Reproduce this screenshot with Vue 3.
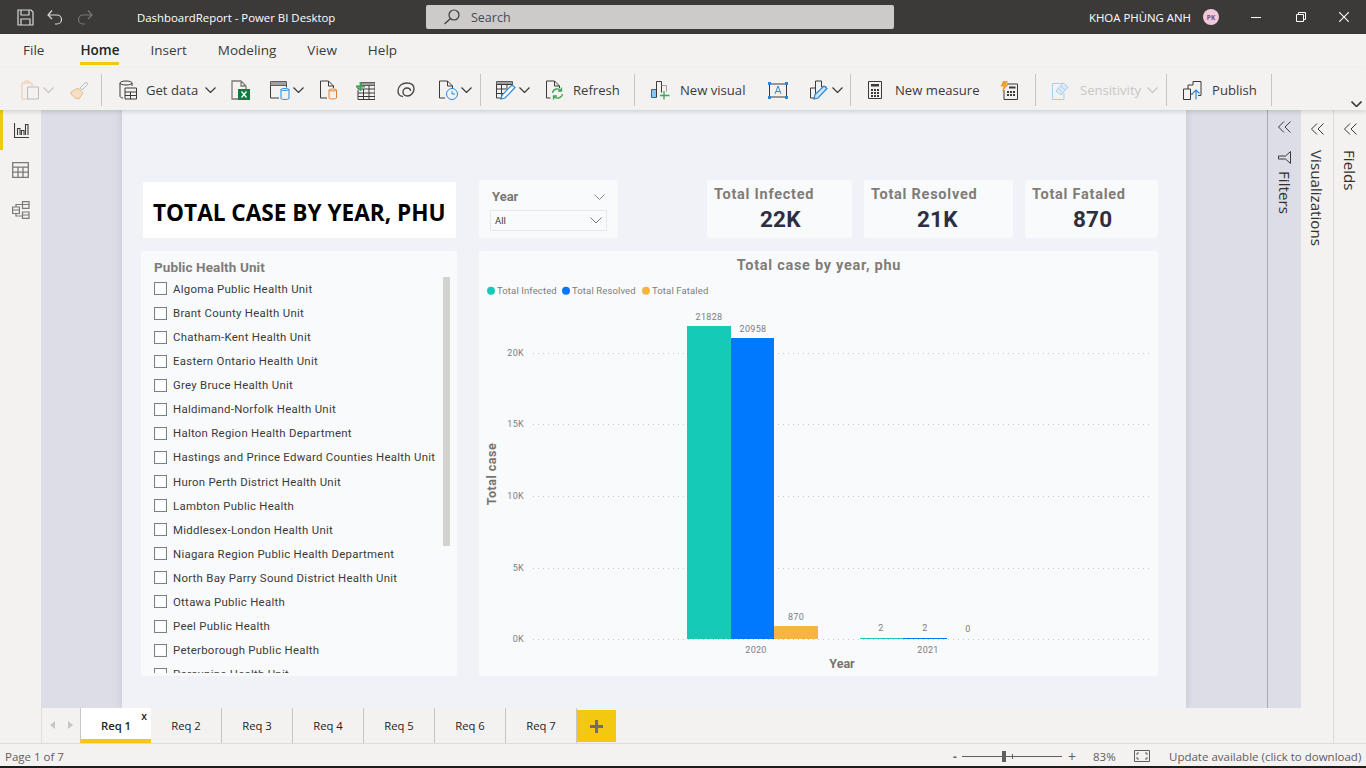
<script setup>
const units = [
  'Algoma Public Health Unit','Brant County Health Unit','Chatham-Kent Health Unit','Eastern Ontario Health Unit',
  'Grey Bruce Health Unit','Haldimand-Norfolk Health Unit','Halton Region Health Department',
  'Hastings and Prince Edward Counties Health Unit','Huron Perth District Health Unit','Lambton Public Health',
  'Middlesex-London Health Unit','Niagara Region Public Health Department','North Bay Parry Sound District Health Unit',
  'Ottawa Public Health','Peel Public Health','Peterborough Public Health','Porcupine Health Unit'
]
const tabs = ['Req 1','Req 2','Req 3','Req 4','Req 5','Req 6','Req 7']
const menu = ['File','Home','Insert','Modeling','View','Help']
const grid = [[353,'20K'],[424,'15K'],[496,'10K'],[568,'5K'],[639,'0K']].map(([y,t]) => ({ y: y-251, t }))
const bars = [
  { x: 208, y: 75, w: 44, h: 313, c: '#15cbb7' },
  { x: 252, y: 87, w: 43, h: 301, c: '#0079ff' },
  { x: 295, y: 375, w: 44, h: 13, c: '#f7b53f' },
  { x: 381, y: 387, w: 43, h: 1, c: '#15cbb7' },
  { x: 424, y: 387, w: 44, h: 1, c: '#0079ff' }
]
const labels = [[230,69,'21828'],[274,81,'20958'],[317,369,'870'],[402,380,'2'],[446,380,'2'],[489,381,'0']]
  .map(([x,y,t]) => ({ x, y, t }))
const legend = [
  { cx: 12, tx: 18, c: '#15cbb7', t: 'Total Infected' },
  { cx: 87, tx: 93, c: '#0079ff', t: 'Total Resolved' },
  { cx: 167, tx: 173, c: '#f7b53f', t: 'Total Fataled' }
]
</script>

<template>
  <div class="app">
    <header class="titlebar">
      <svg class="t-save" width="17" height="17" viewBox="0 0 17 17" fill="none" stroke="#d8d8d6" stroke-width="1.2"><path d="M1 1h13l2 2v13H1z"/><path d="M4 1v5h8V1M4 16v-6h9v6"/></svg>
      <svg class="t-undo" width="16" height="16" viewBox="0 0 16 16" fill="none" stroke="#d8d8d6" stroke-width="1.2"><path d="M1 6h9a4.5 4.5 0 0 1 0 9H8M5 1.500 1 6l4 4"/></svg>
      <svg class="t-redo" width="16" height="16" viewBox="0 0 16 16" fill="none" stroke="#77767a" stroke-width="1.2"><path d="M15 6H6a4.500 4.500 0 0 0 0 9h2M11 1.500 15 6l-4 4"/></svg>
      <span class="t-name">DashboardReport - Power BI Desktop</span>
      <div class="search">
        <svg width="18" height="16" viewBox="0 0 18 16" fill="none" stroke="#3b3a39" stroke-width="1.2"><circle cx="11" cy="6" r="5"/><path d="M7.500 9.500 1.500 15"/></svg>
        <span>Search</span>
      </div>
      <span class="user">KHOA PHÙNG ANH</span>
      <span class="avatar">PK</span>
      <svg class="w-min" width="10" height="10" viewBox="0 0 10 10" stroke="#fff"><path d="M0 5.500h10"/></svg>
      <svg class="w-max" width="10" height="10" viewBox="0 0 10 10" fill="none" stroke="#fff"><path d="M.5 2.500h7v7h-7zM2.500 2.500V.5h7v7h-2"/></svg>
      <svg class="w-close" width="10" height="10" viewBox="0 0 10 10" stroke="#fff" stroke-width="1.100"><path d="M0 0l10 10M10 0 0 10"/></svg>
    </header>

    <nav class="menu">
      <span v-for="m in menu" :key="m" class="m-item" :class="{ on: m === 'Home' }">{{ m }}</span>
    </nav>

    <div class="tools">
      <svg class="ic i-paste" width="18" height="20" viewBox="0 0 18 20" fill="none"><path d="M8 19H1V3h10v3" stroke="#f0c9a4"/><path d="M4 3V1h4v2" stroke="#f0c9a4"/><path d="M6.500 7h11v12h-11z" stroke="#bdbcba"/></svg>
      <svg class="chev c-paste" width="11" height="6" viewBox="0 0 11 6" fill="none" stroke="#c8c6c4" stroke-width="1.200"><path d="M.5.500l5 5 5-5"/></svg>
      <svg class="ic i-brush" width="19" height="19" viewBox="0 0 19 19" fill="none"><path d="M1 11l7-4 5 5-4 6-4-1-4-4z" fill="#f7dfc5" stroke="#e8b98a"/><path d="M10 7l6-6 2 2-6 6z" stroke="#bdbcba"/></svg>
      <i class="sep s1"></i>

      <svg class="ic i-get" width="18" height="20" viewBox="0 0 18 20" fill="none" stroke="#3b3a39"><ellipse cx="7" cy="3" rx="6" ry="2"/><path d="M1 3v13c0 1 1 2 3 2M13 3v3"/><path d="M6 8h11.500v11H6zM6 12h11.500M6 15.500h11.500M11.500 12v7"/></svg>
      <span class="lbl l-get">Get data</span>
      <svg class="chev c-get" width="11" height="6" viewBox="0 0 11 6" fill="none" stroke="#3b3a39" stroke-width="1.200"><path d="M.5.500l5 5 5-5"/></svg>
      <svg class="ic i-xl" width="19" height="20" viewBox="0 0 19 20" fill="none"><path d="M7 19H1V1h9l5 5v3M10 1v5h5" stroke="#7b7a78" stroke-width="1.300"/><rect x="7" y="9" width="12" height="11" fill="#107c41"/><path d="M10.500 11.500l5 6M15.500 11.500l-5 6" stroke="#fff" stroke-width="1.300"/></svg>
      <svg class="ic i-ds" width="20" height="20" viewBox="0 0 20 20" fill="none"><path d="M.5 1.500h16v4H.5z" fill="#a19f9d" stroke="#605e5c"/><path d="M9 18H.5V5.500M16.500 5.500v2" stroke="#3b3a39"/><path d="M11 9.500c0-1.300 8-1.300 8 0v9c0 1.300-8 1.300-8 0zM11 9.500c0 1.300 8 1.300 8 0" stroke="#2b88d8"/></svg>
      <svg class="chev c-ds" width="11" height="6" viewBox="0 0 11 6" fill="none" stroke="#3b3a39" stroke-width="1.200"><path d="M.5.500l5 5 5-5"/></svg>
      <svg class="ic i-sql" width="17" height="20" viewBox="0 0 17 20" fill="none"><path d="M7 18H.5V1h8l5 5v2M8.500 1v5h5" stroke="#3b3a39"/><path d="M9 10c0-1.300 7.500-1.300 7.500 0v8c0 1.300-7.500 1.300-7.500 0zM9 10c0 1.300 7.500 1.300 7.500 0" stroke="#e0822e"/></svg>
      <svg class="ic i-tbl" width="19" height="19" viewBox="0 0 19 19" fill="none"><path d="M5 1.500h14v3H5z" fill="#a19f9d" stroke="#605e5c"/><path d="M2 4.500V8M19 4.500V18.500H2V9M2 8h17M2 12h17M2 15.500h17M7.500 8v11M13 4.500V19" stroke="#3b3a39"/><path d="M0 5.500h9M4.500 1v9" stroke="#3fa35b" stroke-width="1.800"/></svg>
      <svg class="ic i-ring" width="18" height="16" viewBox="0 0 18 16" fill="none" stroke="#4a4948" stroke-width="1.400"><path d="M6 14.500C2.500 14.500.7 11.500 1 8.500 1.500 4 5 1 10 1c4.500 0 7 2.500 7 6 0 4-3.500 7-6.500 7-3 0-4.500-2-4.500-4s1.500-4 4-4 3.500 1.500 3.500 3"/></svg>
      <svg class="ic i-clk" width="19" height="20" viewBox="0 0 19 20" fill="none"><path d="M6 18H.5V1h8l5 5v3M8.500 1v5h5" stroke="#3b3a39"/><circle cx="13" cy="14" r="5.500" stroke="#2b88d8"/><path d="M13 11v3h3" stroke="#2b88d8"/></svg>
      <svg class="chev c-clk" width="11" height="6" viewBox="0 0 11 6" fill="none" stroke="#3b3a39" stroke-width="1.200"><path d="M.5.500l5 5 5-5"/></svg>
      <i class="sep s2"></i>

      <svg class="ic i-pen" width="20" height="20" viewBox="0 0 20 20" fill="none"><path d="M.5 1.500h16v3H.5z" fill="#a19f9d" stroke="#605e5c"/><path d="M7 18H.5V4.500h16v3M.5 9h12M.5 13.500h9M5.500 4.500V18M11 4.500V8" stroke="#3b3a39"/><path d="M5 19l1-4L16 5l3 2.500L9 18z" fill="#fff" stroke="#2b88d8" stroke-width="1.200"/></svg>
      <svg class="chev c-pen" width="11" height="6" viewBox="0 0 11 6" fill="none" stroke="#3b3a39" stroke-width="1.200"><path d="M.5.500l5 5 5-5"/></svg>
      <svg class="ic i-ref" width="18" height="20" viewBox="0 0 18 20" fill="none"><path d="M4.500 18H.5V1h8l5 5v2M8.500 1v5h5" stroke="#3b3a39"/><path d="M6.500 13a5 5 0 0 1 9-2M16.500 14a5 5 0 0 1-9 2M15.500 7.500v3.500H12M7.500 19.500V16H11" stroke="#3fa35b" stroke-width="1.300"/></svg>
      <span class="lbl l-ref">Refresh</span>
      <i class="sep s3"></i>

      <svg class="ic i-nv" width="19" height="20" viewBox="0 0 19 20" fill="none"><path d="M.5 9.500h5v8h-5z" fill="#8fc3ef" stroke="#106ebe"/><path d="M5.500 17V1.500h5v11" stroke="#3b3a39"/><path d="M10.500 5.500h5v6" stroke="#a19f9d"/><path d="M13 11v8.500M9 15.500h9.500" stroke="#3fa35b" stroke-width="1.300"/></svg>
      <span class="lbl l-nv">New visual</span>
      <svg class="ic i-tx" width="20" height="17" viewBox="0 0 20 17" fill="none"><path d="M1.500 2h17v13h-17z" stroke="#3b3a39"/><path d="M0 0h3v3H0zM17 0h3v3h-3zM0 14h3v3H0zM17 14h3v3h-3z" fill="#2b88d8"/><path d="M7 12l3-8 3 8M8 9.500h4" stroke="#2b88d8"/></svg>
      <svg class="ic i-vp" width="18" height="20" viewBox="0 0 18 20" fill="none"><path d="M6 18H.5V8h5V1h6v6h5" stroke="#3b3a39"/><path d="M5.500 8v10" stroke="#3b3a39"/><path d="M4 19l1-4.500L14 6l3 2.500L8 18z" fill="#cfe4f7" stroke="#2b88d8" stroke-width="1.200"/></svg>
      <svg class="chev c-vp" width="11" height="6" viewBox="0 0 11 6" fill="none" stroke="#3b3a39" stroke-width="1.200"><path d="M.5.500l5 5 5-5"/></svg>
      <i class="sep s4"></i>

      <svg class="ic i-calc" width="14" height="18" viewBox="0 0 14 18" fill="none"><path d="M.5.500h13v17H.5z" stroke="#3b3a39"/><path d="M3 3h8v2.500H3z" fill="#3b3a39"/><path d="M3 8h2v2H3zM6 8h2v2H6zM9 8h2v2H9zM3 11h2v2H3zM6 11h2v2H6zM9 11h2v2H9zM3 14h2v2H3zM6 14h2v2H6zM9 14h2v2H9z" fill="#3b3a39"/></svg>
      <span class="lbl l-nm">New measure</span>
      <svg class="ic i-qm" width="18" height="19" viewBox="0 0 18 19" fill="none"><path d="M7 3h10.500v15.500H4V9" stroke="#3b3a39"/><path d="M9 5.500h6.500v2H9z" fill="#3b3a39"/><path d="M7 10h2v2H7zM10 10h2v2h-2zM13 10h2v2h-2zM7 13h2v2H7zM10 13h2v2h-2zM13 13h2v2h-2z" fill="#3b3a39"/><path d="M3 0h5L6 3.500h2.500L2 11l1.500-5.500H.5z" fill="#f2a033"/></svg>
      <i class="sep s5"></i>

      <svg class="ic i-sens" width="18" height="19" viewBox="0 0 18 19" fill="none" stroke="#a9cfea"><path d="M.5 2.500h9l1-1M12 18.500H.5V2.500M12 18.500V12"/><path d="M4 10l7-8 5 4-7 8z" fill="#dcebf7"/><path d="M6.500 7.500l4 4M9 5l4 4"/></svg>
      <span class="lbl l-sens">Sensitivity</span>
      <svg class="chev c-sens" width="11" height="6" viewBox="0 0 11 6" fill="none" stroke="#c8c6c4" stroke-width="1.200"><path d="M.5.500l5 5 5-5"/></svg>
      <i class="sep s6"></i>

      <svg class="ic i-pub" width="19" height="19" viewBox="0 0 19 19" fill="none"><path d="M.5 8h7v10.500H.5z" stroke="#3b3a39"/><path d="M5 8V4h5V.5h8v14h-3M7.500 13H10" stroke="#3b3a39"/><path d="M13 18.500V9M9.500 12.500 13 9l3.500 3.500" stroke="#2b88d8" stroke-width="1.200"/></svg>
      <span class="lbl l-pub">Publish</span>
      <i class="sep s7"></i>
      <svg class="chev collapse" width="11" height="6" viewBox="0 0 11 6" fill="none" stroke="#3b3a39" stroke-width="1.600"><path d="M.5.500l5 5 5-5"/></svg>
    </div>

    <div class="main">
      <aside class="rail">
        <div class="r-item active">
          <svg width="15" height="15" viewBox="0 0 15 15" fill="none" stroke="#3b3a39" stroke-width="1.100"><path d="M.5 0v14.500H15M3.500 12V5.500h2.500V12M7.500 12V7.500H10V12M11.500 12V1.500H14V12"/></svg>
        </div>
        <div class="r-item">
          <svg width="17" height="16" viewBox="0 0 17 16" fill="none" stroke="#7b7a78" stroke-width="1.300"><path d="M.7.700h15.600v14.600H.7zM.7 5.200h15.600M.7 10.200h15.600M6 5v10M11 5v10"/></svg>
        </div>
        <div class="r-item">
          <svg width="18" height="18" viewBox="0 0 18 18" fill="none" stroke="#7b7a78" stroke-width="1.200"><path d="M.6 6h6.800v6.500H.6zM.6 9h6.800M10.500.6H17v6.800h-6.500zM10.500 3.500H17M10.500 11H17v6.400h-6.500zM10.500 14H17M4 6V3.500h6.500M4 12.500V15h6.500"/></svg>
        </div>
      </aside>

      <div class="center">
        <div class="work">
          <section class="canvas">
            <div class="page">
              <div class="top-row">
                <div class="title-card">TOTAL CASE BY YEAR, PHU</div>
                <div class="slicer">
                  <div class="sl-head">
                    <span>Year</span>
                    <svg width="11" height="6" viewBox="0 0 11 6" fill="none" stroke="#8a8886"><path d="M.5.500l5 5 5-5"/></svg>
                  </div>
                  <div class="sl-box">
                    <span>All</span>
                    <svg width="12" height="7" viewBox="0 0 12 7" fill="none" stroke="#7b7a78"><path d="M.5.500l5.500 5.500L11.500.5"/></svg>
                  </div>
                </div>
                <div class="kpi k1"><span class="k-t">Total Infected</span><b class="v1">22K</b></div>
                <div class="kpi k2"><span class="k-t">Total Resolved</span><b class="v2">21K</b></div>
                <div class="kpi k3"><span class="k-t">Total Fataled</span><b class="v3">870</b></div>
              </div>

              <div class="bottom-row">
                <div class="listcard">
                  <div class="l-title">Public Health Unit</div>
                  <div class="scroll"></div>
                  <ul class="list">
                    <li v-for="u in units" :key="u"><i class="cb"></i><span>{{ u }}</span></li>
                  </ul>
                </div>

                <div class="chart">
                  <svg width="679" height="425" viewBox="0 0 679 425">
                    <text x="340" y="18.500" class="c-title" text-anchor="middle">Total case by year, phu</text>
                    <g v-for="l in legend" :key="l.t">
                      <circle :cx="l.cx" cy="39.700" r="4" :fill="l.c"/>
                      <text :x="l.tx" y="43" class="c-leg">{{ l.t }}</text>
                    </g>
                    <g v-for="g in grid" :key="g.t">
                      <line x1="54" x2="674" :y1="g.y + .5" :y2="g.y + .5" stroke="#c8c8c8" stroke-dasharray="1 4"/>
                      <text x="45" :y="g.y + 3" class="c-ax" text-anchor="end">{{ g.t }}</text>
                    </g>
                    <rect v-for="b in bars" :key="b.x" :x="b.x" :y="b.y" :width="b.w" :height="b.h" :fill="b.c"/>
                    <text v-for="l in labels" :key="l.x" :x="l.x" :y="l.y" class="c-ax" text-anchor="middle">{{ l.t }}</text>
                    <text x="277" y="402" class="c-ax" text-anchor="middle">2020</text>
                    <text x="449" y="402" class="c-ax" text-anchor="middle">2021</text>
                    <text x="363" y="417" class="c-bold" text-anchor="middle">Year</text>
                    <text transform="translate(17 223) rotate(-90)" class="c-bold ct" text-anchor="middle">Total case</text>
                  </svg>
                </div>
              </div>
            </div>
          </section>
          <aside class="filter">
            <svg class="dbl" width="13" height="12" viewBox="0 0 13 12" fill="none" stroke="#3b3a39"><path d="M6 .5.500 6 6 11.500M12.500.5 7 6l5.500 5.500"/></svg>
            <svg class="funnel" width="13" height="13" viewBox="0 0 13 13" fill="none" stroke="#3b3a39"><path d="M12.500.5V12.500L7.500 8H.5V5H7.500z"/></svg>
            <span class="v-txt">Filters</span>
          </aside>
        </div>

        <div class="tabbar">
          <div class="arrows">
            <i class="ar left"></i><i class="ar right"></i>
          </div>
          <div v-for="(t, n) in tabs" :key="t" class="tab" :class="{ on: n === 0 }">
            <span>{{ t }}</span>
            <em v-if="n === 0">x</em>
          </div>
          <div class="add">
            <svg width="13" height="13" viewBox="0 0 13 13"><path d="M5 0h3v5h5v3H8v5H5V8H0V5h5z" fill="#6e6e6e"/></svg>
          </div>
        </div>
      </div>

      <aside class="pane viz">
        <svg class="dbl" width="13" height="12" viewBox="0 0 13 12" fill="none" stroke="#3b3a39"><path d="M6 .5.500 6 6 11.500M12.500.5 7 6l5.500 5.500"/></svg>
        <span class="v-txt">Visualizations</span>
      </aside>
      <aside class="pane fields">
        <svg class="dbl" width="13" height="12" viewBox="0 0 13 12" fill="none" stroke="#3b3a39"><path d="M6 .5.500 6 6 11.500M12.500.5 7 6l5.500 5.500"/></svg>
        <span class="v-txt">Fields</span>
      </aside>
    </div>

    <footer class="status">
      <span class="pg">Page 1 of 7</span>
      <span class="zm">-</span>
      <div class="slider"><i class="thumb"></i><i class="tick"></i></div>
      <span class="zp">+</span>
      <span class="pct">83%</span>
      <svg class="fit" width="16" height="12" viewBox="0 0 16 12" fill="none"><path d="M.5.500h15v11H.5z" stroke="#605e5c"/><path d="M3 5V3h2M11 3h2v2M13 7v2h-2M5 9H3V7" stroke="#605e5c"/></svg>
      <span class="upd">Update available (click to download)</span>
    </footer>
    <div class="blackbar"></div>
  </div>
</template>

<style>
html, body { margin: 0; padding: 0; overflow: hidden; }
</style>

<style scoped>
.app { width: 1366px; height: 768px; display: flex; flex-direction: column; overflow: hidden; background: #f3f2f1; font-family: "Open Sans", "Noto Sans", sans-serif; color: #323130; }

.titlebar { height: 34px; flex: none; background: #3b3a39; display: flex; align-items: center; color: #fff; }
.t-save { margin-left: 17px; }
.t-undo { margin-left: 13px; }
.t-redo { margin-left: 14px; }
.t-name { margin-left: 44px; font-size: 11.400px; white-space: nowrap; width: 289px; }
.search { width: 468px; height: 24px; background: #cdcbc9; border-radius: 2px; display: flex; align-items: center; color: #3f4a5c; font-size: 12.500px; box-sizing: border-box; padding-left: 17px; gap: 10px; }
.user { margin-left: 195px; font-size: 11.400px; white-space: nowrap; width: 114px; }
.avatar { width: 16px; height: 16px; border-radius: 50%; background: #f1c9da; color: #8a4560; font-size: 6.500px; font-weight: 700; display: flex; align-items: center; justify-content: center; }
.w-min { margin-left: 32px; }
.w-max { margin-left: 35px; }
.w-close { margin-left: 33px; }

.menu { height: 34px; flex: none; display: flex; padding-left: 23px; box-sizing: border-box; }
.m-item { font-size: 13.500px; line-height: 33px; position: relative; height: 31px; color: #3b3a39; margin-right: 31px; }
.m-item:first-child { margin-right: 36px; }
.m-item.on { font-weight: 600; color: #252423; }
.m-item.on::after { content: ""; position: absolute; left: 0; right: 0; bottom: 0; height: 3px; background: #f2c811; }

.tools { height: 42px; flex: none; display: flex; align-items: center; position: relative; box-shadow: 0 2px 4px rgba(0,0,0,.13); z-index: 2; background: #f3f2f1; padding-top: 2px; box-sizing: border-box; }
.tools > * { flex: none; }
.sep { width: 1px; height: 32px; background: #c8c6c4; }
.lbl { font-size: 13.100px; white-space: nowrap; color: #3b3a39; }
.i-paste { margin-left: 21px; }
.c-paste { margin-left: 4px; }
.i-brush { margin-left: 16px; }
.s1 { margin-left: 12px; }
.i-get { margin-left: 17px; }
.l-get { margin-left: 9px; width: 52px; }
.c-get { margin-left: 7px; }
.i-xl { margin-left: 15px; }
.i-ds { margin-left: 20px; }
.c-ds { margin-left: 3px; }
.i-sql { margin-left: 16px; }
.i-tbl { margin-left: 19px; }
.i-ring { margin-left: 22px; }
.i-clk { margin-left: 24px; }
.c-clk { margin-left: 3px; }
.s2 { margin-left: 8px; }
.i-pen { margin-left: 15px; }
.c-pen { margin-left: 3px; }
.i-ref { margin-left: 16px; }
.l-ref { margin-left: 9px; width: 46px; }
.s3 { margin-left: 15px; }
.i-nv { margin-left: 16px; }
.l-nv { margin-left: 10px; width: 67px; }
.i-tx { margin-left: 21px; }
.i-vp { margin-left: 22px; }
.c-vp { margin-left: 4px; }
.s4 { margin-left: 7px; }
.i-calc { margin-left: 17px; }
.l-nm { margin-left: 13px; width: 85px; }
.i-qm { margin-left: 20px; }
.s5 { margin-left: 17px; }
.i-sens { margin-left: 16px; }
.l-sens { margin-left: 10px; width: 63px; color: #c8c6c4; }
.c-sens { margin-left: 4px; }
.s6 { margin-left: 8px; }
.i-pub { margin-left: 16px; }
.l-pub { margin-left: 10px; width: 45px; }
.s7 { margin-left: 14px; }
.collapse { position: absolute; right: 4px; bottom: 3px; }

.main { flex: 1; display: flex; min-height: 0; border-bottom: 1px solid #dddcda; }
.rail { width: 41px; flex: none; display: flex; flex-direction: column; }
.r-item { height: 40px; display: flex; align-items: center; justify-content: center; box-sizing: border-box; }
.r-item.active { border-left: 3px solid #f2c811; padding-right: 1px; }

.center { flex: 1; display: flex; flex-direction: column; min-width: 0; }
.work { height: 598px; flex: none; display: flex; }
.canvas { flex: 1; background: #dcdde6; padding-left: 81px; min-width: 0; }
.page { width: 1064px; height: 100%; background: #f1f2f7; box-shadow: 0 0 8px rgba(0,0,0,.12); padding: 70px 0 0 19px; box-sizing: border-box; font-family: Roboto, "Noto Sans", sans-serif; }
.top-row { display: flex; height: 58px; }
.title-card { width: 313px; height: 56px; margin: 2px 0 0 2px; background: #fff; color: #000; font-family: "Open Sans", sans-serif; font-weight: 700; font-size: 22.600px; line-height: 62px; padding-left: 10px; box-sizing: border-box; white-space: nowrap; }
.slicer { width: 139px; margin-left: 23px; background: #f9fafc; border-radius: 3px; padding: 10px 11px 0; box-sizing: border-box; }
.sl-head { display: flex; justify-content: space-between; align-items: center; padding: 0 2px; font-weight: 700; font-size: 13px; color: #7a7672; line-height: 14px; }
.sl-box { margin-top: 6px; height: 21px; border: 1px solid #e6e8ec; display: flex; justify-content: space-between; align-items: center; padding: 0 4px; box-sizing: border-box; font-size: 9.500px; color: #3b3a39; }
.kpi { background: #f9fafc; border-radius: 3px; box-sizing: border-box; padding: 5px 7px 0; display: flex; flex-direction: column; }
.k1 { width: 145px; margin-left: 89px; }
.k2 { width: 149px; margin-left: 12px; }
.k3 { width: 133px; margin-left: 12px; }
.k-t { font-weight: 700; font-size: 14.500px; color: #807c78; line-height: 19px; white-space: nowrap; letter-spacing: .75px; }
.kpi b { font-size: 22.500px; color: #2e2e42; line-height: 30px; font-weight: 700; letter-spacing: .2px; }
.v1 { margin-left: 46px; }
.v2 { margin-left: 46px; }
.v3 { margin-left: 41px; }

.bottom-row { display: flex; margin-top: 13px; }
.listcard { width: 316px; height: 425px; background: #f9fafc; border-radius: 3px; position: relative; overflow: hidden; padding-left: 13px; box-sizing: border-box; }
.l-title { font-weight: 700; font-size: 13.500px; color: #807c78; line-height: 16px; padding-top: 8px; letter-spacing: .1px; }
.scroll { position: absolute; left: 302px; top: 26px; width: 7px; height: 269px; background: #d2d2ce; }
.list { list-style: none; margin: 1.900px 0 0; padding: 0; height: 396px; overflow: hidden; }
.list li { display: flex; align-items: center; height: 24.080px; font-size: 11.400px; color: #3b3a39; letter-spacing: .28px; white-space: nowrap; }
.cb { width: 13px; height: 13px; border: 1px solid #7f8083; box-sizing: border-box; margin-right: 6px; background: #fff; box-shadow: inset 0 0 0 1px #f4f9fd; }
.chart { width: 679px; height: 425px; margin-left: 22px; background: #f9fafc; border-radius: 3px; }
.chart svg { display: block; }
.c-title { font: 700 14.500px Roboto, sans-serif; fill: #807c78; letter-spacing: .72px; }
.c-leg { font: 400 9.500px Roboto, sans-serif; fill: #7d7d7d; letter-spacing: .12px; }
.c-ax { font: 400 9px Roboto, sans-serif; fill: #7d7d7d; letter-spacing: .3px; }
.c-bold { font: 700 12.500px Roboto, sans-serif; fill: #77736f; }
.ct { letter-spacing: .5px; }

.filter { width: 34px; flex: none; background: #dcdde6; border-left: 1px solid #a9a9ad; box-sizing: border-box; display: flex; flex-direction: column; align-items: center; }
.pane { flex: none; display: flex; flex-direction: column; align-items: center; }
.viz { width: 33px; border-right: 1px solid #dddcda; box-sizing: border-box; }
.fields { width: 32px; }
.dbl { margin-top: 13px; flex: none; }
.filter .dbl { margin-top: 11px; }
.funnel { margin-top: 18px; flex: none; }
.v-txt { writing-mode: vertical-rl; font-size: 15.200px; color: #323130; margin-top: 15px; white-space: nowrap; }
.filter .v-txt { margin-top: 7px; }

.tabbar { flex: 1; display: flex; background: #f3f2f1; border-left: 1px solid #e1dfdd; }
.arrows { width: 38px; display: flex; align-items: center; justify-content: center; gap: 13px; padding-bottom: 2px; box-sizing: border-box; }
.ar { width: 0; height: 0; border-top: 4px solid transparent; border-bottom: 4px solid transparent; }
.ar.left { border-right: 5px solid #c8c6c4; }
.ar.right { border-left: 5px solid #c8c6c4; }
.tab { width: 71px; box-sizing: border-box; border-right: 1px solid #c8c6c4; display: flex; align-items: center; justify-content: center; font-size: 11.300px; color: #252423; position: relative; }
.tab.on { background: #fff; border-left: 1px solid #c8c6c4; border-right: none; border-bottom: 4px solid #f2c811; padding-top: 3px; width: 71px; font-weight: 600; }
.tab em { position: absolute; right: 4px; top: 2px; font-style: normal; font-size: 10.500px; font-weight: 600; line-height: 12px; }
.add { width: 39px; height: 32px; margin-top: 2px; background: #f2c811; display: flex; align-items: center; justify-content: center; }

.status { height: 22px; padding-top: 2px; box-sizing: border-box; flex: none; display: flex; align-items: center; font-size: 11.500px; color: #605e5c; position: relative; }
.pg { margin-left: 5px; width: 948px; }
.zm { width: 9px; font-weight: 700; }
.slider { width: 100px; height: 1px; background: #605e5c; position: relative; }
.thumb { position: absolute; left: 40px; top: -5px; width: 4px; height: 11px; background: #605e5c; }
.tick { position: absolute; left: 50px; top: -2px; width: 1px; height: 5px; background: #605e5c; }
.zp { margin-left: 6px; width: 25px; font-size: 14px; }
.pct { width: 41px; }
.fit { margin-right: 19px; }
.upd { white-space: nowrap; }
.blackbar { height: 2px; flex: none; background: #1c1c1c; }
</style>
